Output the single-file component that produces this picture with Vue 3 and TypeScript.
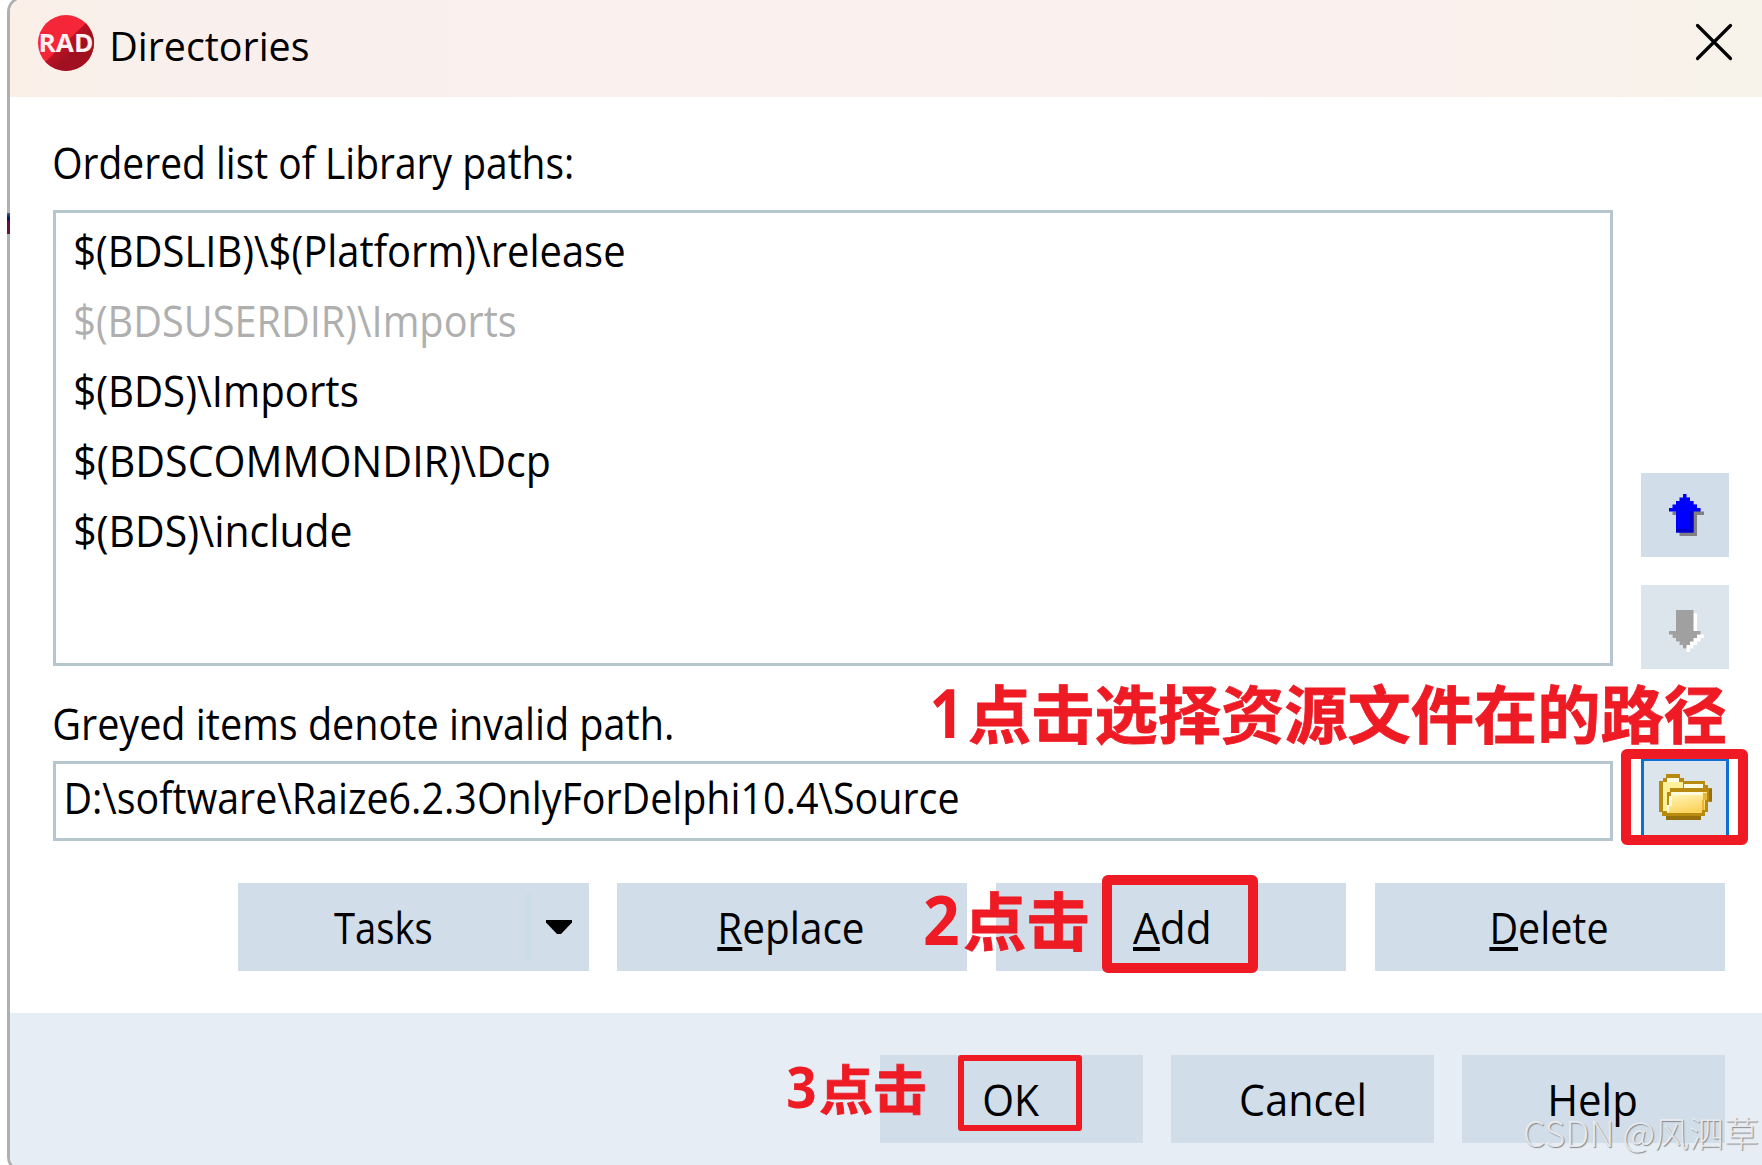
<script setup lang="ts">
import type { Directive } from 'vue'

interface PathItem { text: string; width: number; invalid?: boolean }
interface ActionButton { key: string; rest: string; width: number }

const paths: PathItem[] = [
  { text: '$(BDSLIB)\\$(Platform)\\release', width: 549 },
  { text: '$(BDSUSERDIR)\\Imports', width: 440, invalid: true },
  { text: '$(BDS)\\Imports', width: 282 },
  { text: '$(BDSCOMMONDIR)\\Dcp', width: 474 },
  { text: '$(BDS)\\include', width: 276 },
]

const actions: ActionButton[] = [
  { key: 'R', rest: 'eplace', width: 142 },
  { key: 'A', rest: 'dd', width: 76 },
  { key: 'D', rest: 'elete', width: 114 },
]

const footerButtons = [
  { text: 'OK', width: 55 },
  { text: 'Cancel', width: 123 },
  { text: 'Help', width: 85 },
]

// Condenses or widens a text run so that its visible ink fills the given width.
const vFit: Directive<HTMLElement, number> = {
  mounted(el, { value }) {
    const ctx = document.createElement('canvas').getContext('2d')
    if (!ctx) return
    const cs = getComputedStyle(el)
    ctx.font = `${cs.fontWeight} ${cs.fontSize} ${cs.fontFamily}`
    const m = ctx.measureText((el.textContent ?? '').trim())
    const scale = value / (m.actualBoundingBoxLeft + m.actualBoundingBoxRight)
    el.style.width = `${value}px`
    el.style.transform = `translateX(${m.actualBoundingBoxLeft * scale}px) scaleX(${scale})`
  },
}

const upArrow = 'M4 0h1v1h1v1h1v1h1v1h1v1h-2v6h-5v-6h-2v-1h1v-1h1v-1h1v-1h1z'
const downArrow = 'M2 0h5v6h2v1h-1v1h-1v1h-1v1h-1v1h-1v-1h-1v-1h-1v-1h-1v-1h-1v-1h2z'
</script>

<template>
  <div class="screen">
    <div class="dialog">
      <header class="titlebar">
        <svg class="logo" width="58" height="58" viewBox="0 0 58 58">
          <defs>
            <linearGradient id="dark" x1="0" y1="0" x2="1" y2="1">
              <stop offset="0.3" stop-color="#c81428" />
              <stop offset="0.6" stop-color="#a01020" />
            </linearGradient>
            <clipPath id="disc"><circle cx="29" cy="29" r="28" /></clipPath>
          </defs>
          <g clip-path="url(#disc)">
            <rect width="58" height="58" fill="#f52638" />
            <path d="M50 8L8 48L14 58H58V8z" fill="url(#dark)" />
          </g>
          <text x="1.5" y="38" textLength="55" lengthAdjust="spacingAndGlyphs">RAD</text>
        </svg>
        <span v-fit="195" class="title fit">Directories</span>
        <svg class="close" width="38" height="38" viewBox="0 0 38 38">
          <path d="M2.5 2.5L35.500 35.500M35.500 2.500L2.500 35.500" />
        </svg>
      </header>

      <main class="body">
        <div class="label first"><span v-fit="518" class="fit">Ordered list of Library paths:</span></div>
        <div class="list-row">
          <ul class="list">
            <li v-for="p in paths" :key="p.text" :class="{ invalid: p.invalid }">
              <span v-fit="p.width" class="fit">{{ p.text }}</span>
            </li>
          </ul>
          <div class="movers">
            <button class="mover">
              <svg width="35" height="42" viewBox="0 0 10 12">
                <path :d="upArrow" transform="translate(1 1)" fill="#808080" />
                <path :d="upArrow" fill="#0000ff" />
                <path d="M6 5h1v6h-5v-1h4z" fill="#0000c8" />
              </svg>
            </button>
            <button class="mover disabled">
              <svg width="35" height="42" viewBox="0 0 10 12">
                <path :d="downArrow" transform="translate(1 1)" fill="#ffffff" />
                <path :d="downArrow" fill="#a0a0a0" />
              </svg>
            </button>
          </div>
        </div>

        <div class="label second"><span v-fit="618" class="fit">Greyed items denote invalid path.</span></div>
        <div class="edit-row">
          <div class="edit"><span v-fit="891" class="fit">D:\software\Raize6.2.3OnlyForDelphi10.4\Source</span></div>
          <button class="browse">
            <svg width="54" height="47" viewBox="0 0 54 47">
              <defs>
                <linearGradient id="front" x1="0" y1="0" x2="0.4" y2="1">
                  <stop offset="0" stop-color="#fffbc4" />
                  <stop offset="1" stop-color="#fcd35f" />
                </linearGradient>
              </defs>
              <path d="M7 0H21V4H25V7H46V11H49V14H53V28H49V38H46V42H42V46H7V42H3V38H0V7H4V4H7z" fill="#b88a10" />
              <path d="M8 4H20V8H24V14H11V18H8V37H4V8H8z" fill="#fff19a" />
              <path d="M8 4H20V8H8z M25 10H44V14H25z" fill="#fffce6" />
              <path d="M12 18H48V24H46V36H43V39H8V32H10V22H12z" fill="url(#front)" />
              <path d="M12 18H43V21H13V32H10V38H8V31H10V22H12z" fill="#fffbe0" />
              <path d="M44 19H48V26H45V36H43V26H44z" fill="#e6b73a" />
              <path d="M7 42H42V46H7z M50 15H53V27H50z" fill="#96700c" />
            </svg>
          </button>
        </div>

        <div class="actions">
          <button class="btn tasks">
            <span class="tasks-text"><span v-fit="97" class="fit">Tasks</span></span>
            <i class="divider"></i>
            <svg width="26" height="14" viewBox="0 0 26 14"><path d="M0 0H26V2.500L15 14H11L0 2.500z" /></svg>
          </button>
          <button v-for="a in actions" :key="a.key" class="btn">
            <span v-fit="a.width" class="fit"><u>{{ a.key }}</u>{{ a.rest }}</span>
          </button>
        </div>
      </main>

      <footer class="footer">
        <button v-for="b in footerButtons" :key="b.text" class="btn small">
          <span v-fit="b.width" class="fit">{{ b.text }}</span>
        </button>
      </footer>
    </div>

    <i class="edge-mark"></i>

    <div class="note note-1"><span v-fit="22" class="fit digit">1</span><span v-fit="756" class="fit hanzi">点击选择资源文件在的路径</span></div>
    <div class="note note-2"><span v-fit="33" class="fit digit">2</span><span v-fit="123" class="fit hanzi">点击</span></div>
    <div class="note note-3"><span v-fit="27" class="fit digit">3</span><span v-fit="105" class="fit hanzi">点击</span></div>
    <div class="frame frame-1"></div>
    <div class="frame frame-2"></div>
    <div class="frame frame-3"></div>
    <div class="watermark"><span v-fit="128" class="fit">CSDN @</span><span v-fit="103" class="fit">风泗草</span></div>
  </div>
</template>

<style>
body {
  margin: 0;
  background: #fff;
}
</style>

<style scoped>
.screen {
  position: relative;
  width: 1762px;
  height: 1165px;
  overflow: hidden;
  background: #fff;
  color: #000;
  font: 400 44px/60px 'Open Sans', 'Noto Sans', sans-serif;
}
.dialog {
  box-sizing: border-box;
  display: flex;
  flex-direction: column;
  width: 1790px;
  height: 1177px;
  margin: -4px 0 0 7px;
  border: 3px solid #b0b0b0;
  border-radius: 16px;
  overflow: hidden;
}
.fit {
  display: inline-block;
  white-space: nowrap;
  transform-origin: 0 50%;
}
.titlebar {
  box-sizing: border-box;
  display: flex;
  align-items: center;
  height: 98px;
  padding: 0 61px 8px 27px;
  background: linear-gradient(90deg, #faf0e8 0, #f9efec 180px, #faf0ec 1500px, #f7f2ea 1680px, #f7f2ea 100%);
}
.logo {
  margin-top: -2px;
}
.logo text {
  font: 700 25px 'Open Sans', sans-serif;
  fill: #fff0f2;
}
.title {
  margin: 1px 0 0 18px;
  font-size: 41px;
}
.close {
  margin-left: auto;
  margin-top: -4px;
}
.close path {
  fill: none;
  stroke: #000;
  stroke-width: 3.2;
  stroke-linecap: round;
}
.body {
  box-sizing: border-box;
  height: 916px;
  padding: 35px 0 0 43px;
  background: #fff;
}
.label {
  height: 60px;
  padding-left: 1px;
}
.second {
  margin-top: 24px;
}
.list-row {
  display: flex;
  gap: 28px;
  margin-top: 18px;
}
.list {
  box-sizing: border-box;
  width: 1560px;
  height: 456px;
  margin: 0;
  padding: 2px 19px 0;
  border: 3px solid #b6c6cf;
  list-style: none;
}
.list li {
  height: 70px;
  line-height: 70px;
}
.invalid {
  color: #afafaf;
}
.movers {
  display: flex;
  flex-direction: column;
  gap: 28px;
  padding-top: 263px;
}
button {
  box-sizing: border-box;
  margin: 0;
  padding: 0;
  border: 0;
  background: #d1dde9;
  color: inherit;
  font: inherit;
}
.mover {
  display: flex;
  width: 88px;
  height: 84px;
  padding: 21px 0 0 28px;
}
.mover.disabled {
  padding-top: 25px;
  background: #dce4ec;
}
.edit-row {
  display: flex;
  gap: 28px;
  margin-top: 8px;
}
.edit {
  box-sizing: border-box;
  width: 1560px;
  height: 80px;
  padding: 3px 11px;
  border: 3px solid #b6c6cf;
}
.browse {
  display: flex;
  width: 88px;
  height: 81px;
  margin: -3px 0 0;
  padding: 13px 0 0 15px;
  border: 3px solid #0a70d4;
  background: #dce4ec;
}
.actions {
  display: flex;
  gap: 28.4px;
  margin: 42px 0 0 185px;
}
.btn {
  display: flex;
  align-items: center;
  justify-content: center;
  width: 350.5px;
  height: 88px;
  padding-bottom: 1px;
}
.btn u {
  text-decoration-thickness: 3.5px;
  text-underline-offset: 3px;
  text-decoration-skip-ink: none;
}
.tasks {
  justify-content: flex-start;
}
.tasks-text {
  width: 288px;
  text-align: center;
}
.divider {
  width: 5px;
  height: 66px;
  margin-right: 15px;
  background: #cbdce9;
}
.footer {
  box-sizing: border-box;
  display: flex;
  flex: 1;
  gap: 28px;
  padding: 42px 0 0 869.500px;
  background: #e6edf4;
}
.small {
  width: 263px;
  padding-left: 1px;
}
.edge-mark {
  position: absolute;
  left: 7px;
  top: 213px;
  width: 3px;
  height: 21px;
  background: linear-gradient(#2a6aa0 0, #101050 25%, #6a1040 45%);
}
.note {
  position: absolute;
  display: flex;
  align-items: baseline;
  color: #ee1b24;
  font: 700 63px/63px 'Noto Sans CJK SC', sans-serif;
}
.hanzi {
  -webkit-text-stroke: 0.8px #ee1b24;
}
.digit {
  position: relative;
  font-family: 'Open Sans', sans-serif;
  font-size: 68px;
}
.note-1 {
  left: 933px;
  top: 679px;
  gap: 14px;
}
.note-2 {
  left: 925px;
  top: 886px;
  gap: 6px;
}
.note-3 {
  left: 788px;
  top: 1061px;
  gap: 5px;
  font-size: 53px;
  line-height: 53px;
}
.note-3 .digit {
  top: -2px;
  font-size: 57px;
}
.frame {
  position: absolute;
  box-sizing: border-box;
  border: 10px solid #ee1b24;
  border-radius: 6px;
}
.frame-1 {
  left: 1621px;
  top: 749px;
  width: 127px;
  height: 96px;
}
.frame-2 {
  left: 1102px;
  top: 875px;
  width: 156px;
  height: 98px;
}
.frame-3 {
  left: 958px;
  top: 1055px;
  width: 124px;
  height: 76px;
  border-width: 6px;
  border-radius: 3px;
}
.watermark {
  position: absolute;
  left: 1525px;
  top: 1114px;
  display: flex;
  gap: 2px;
  color: rgba(238, 240, 242, 0.9);
  font: 300 35px/36px 'Noto Sans CJK SC', sans-serif;
  text-shadow: 1px 1px 1px #85898e;
}
</style>
